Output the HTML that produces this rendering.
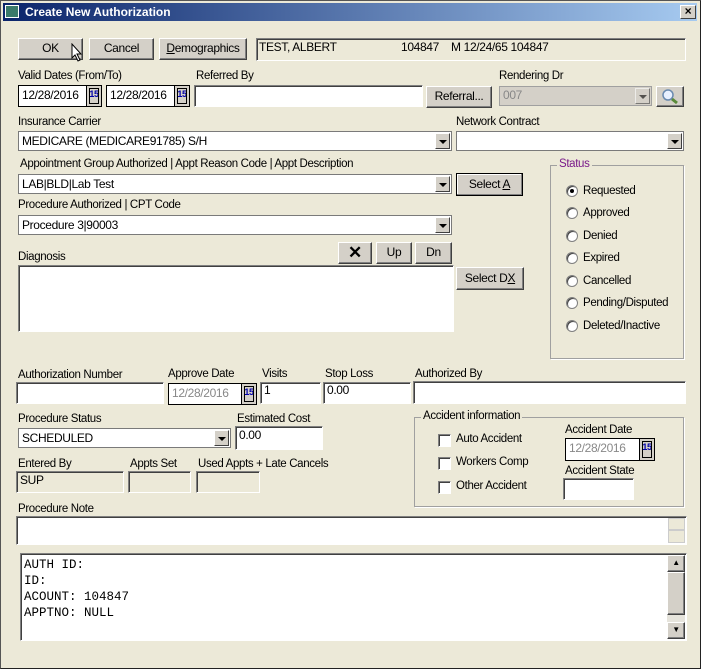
<!DOCTYPE html>
<html><head><style>
*{box-sizing:border-box;margin:0;padding:0}
body{width:701px;height:669px;background:#ece9d8;font-family:"Liberation Sans",sans-serif;font-size:11.5px;letter-spacing:-0.35px;color:#000;position:relative;overflow:hidden}
.a{position:absolute;white-space:nowrap}
.win{position:absolute;left:0;top:0;width:701px;height:669px;border:1px solid #555;border-right-color:#222;border-bottom-color:#222}
.title{position:absolute;left:3px;top:3px;width:694px;height:18px;background:linear-gradient(90deg,#0a246a,#a6caf0);color:#fff;font-weight:bold;font-size:12px;letter-spacing:0;padding:2px 0 0 22px}
.close{position:absolute;left:680px;top:5px;width:16px;height:14px;background:#d4d0c8;border:1px solid;border-color:#fff #404040 #404040 #fff;font-size:12px;font-weight:bold;text-align:center;line-height:11px;color:#000}
.btn{position:absolute;background:#d4d0c8;border:1px solid;border-color:#fff #404040 #404040 #fff;box-shadow:inset -1px -1px 0 #808080;text-align:center;font-size:12px}
.in{position:absolute;background:#fff;border:1px solid;border-color:#808080 #fff #fff #808080;box-shadow:inset 1px 1px 0 #404040;padding:2px 3px;font-size:12px}
.gr{background:#ece9d8}
.cb{position:absolute;background:#fff;border:1px solid #7a7a7a;padding:2px 3px;font-size:12px}
.dd{position:absolute;right:1px;top:1px;width:15px;bottom:1px;background:#d4d0c8;border:1px solid;border-color:#fff #404040 #404040 #fff}
.dd:after{content:"";position:absolute;left:3px;top:6px;border-left:4px solid transparent;border-right:4px solid transparent;border-top:4px solid #000}
.cal{position:absolute;width:16px;background:#d4d0c8;border:1px solid #000;font-size:9px;color:#00a;text-align:center;line-height:16px;font-weight:bold}
.cal:before{content:"";position:absolute;left:2px;top:2px;right:2px;bottom:2px;border:1px solid #000}
.rad{position:absolute;width:12px;height:12px;border-radius:50%;background:#fff;border:1px solid #808080;box-shadow:inset 1px 1px 0 #404040}
.chk{position:absolute;width:13px;height:13px;background:#fff;border:1px solid;border-color:#808080 #fff #fff #808080;box-shadow:inset 1px 1px 0 #404040}
.grp{position:absolute;border:1px solid #a0a0a0;box-shadow:1px 1px 0 #fff}
.gt{position:absolute;background:#ece9d8;padding:0 2px}
.mono{font-family:"Liberation Mono",monospace;font-size:12.5px;letter-spacing:0;line-height:16px}
</style></head><body>
<div class="win"></div>
<div class="title">Create New Authorization</div>
<div class="a" style="left:5px;top:5px;width:14px;height:13px;background:#3a7a6a;border:1px solid #fff"></div>
<div class="close">×</div>

<div class="btn" style="left:18px;top:38px;width:65px;height:22px;line-height:19px">OK</div>
<div class="btn" style="left:89px;top:38px;width:65px;height:22px;line-height:19px">Cancel</div>
<div class="btn" style="left:159px;top:38px;width:88px;height:22px;line-height:19px"><u>D</u>emographics</div>
<svg class="a" style="left:71px;top:43px" width="12" height="20"><path d="M1 1 L1 15 L4 12 L7 18 L9 17 L6 11 L10 11 Z" fill="#fff" stroke="#000"/></svg>
<div class="in gr" style="left:256px;top:38px;width:430px;height:23px;padding:1px 3px"></div>
<div class="a" style="left:259px;top:40px;font-size:12px">TEST, ALBERT</div>
<div class="a" style="left:401px;top:40px;font-size:12px">104847</div>
<div class="a" style="left:451px;top:40px;font-size:12px">M 12/24/65 104847</div>

<div class="a" style="left:18px;top:70px">Valid Dates (From/To)</div>
<div class="in" style="left:18px;top:85px;width:69px;height:22px;border:1px solid #000;box-shadow:none;color:#000">12/28/2016</div>
<div class="cal" style="left:86px;top:85px;height:22px">15</div>
<div class="in" style="left:106px;top:85px;width:69px;height:22px;border:1px solid #000;box-shadow:none">12/28/2016</div>
<div class="cal" style="left:174px;top:85px;height:22px">15</div>
<div class="a" style="left:196px;top:70px">Referred By</div>
<div class="in" style="left:194px;top:85px;width:229px;height:22px"></div>
<div class="btn" style="left:426px;top:86px;width:66px;height:22px;line-height:19px">Referral...</div>
<div class="a" style="left:499px;top:70px">Rendering Dr</div>
<div class="cb" style="left:499px;top:86px;width:153px;height:20px;background:#d4d0c8;border-color:#a0a0a0;color:#888;padding-top:1px">007<div class="dd" style="opacity:.6"></div></div>
<div class="btn" style="left:656px;top:86px;width:28px;height:21px"><svg width="20" height="18" viewBox="0 0 20 18"><circle cx="8" cy="8" r="5" fill="#e8f0ff" stroke="#6a8ab0" stroke-width="1.5"/><path d="M12 12 L17 16" stroke="#5a8a3a" stroke-width="3"/></svg></div>

<div class="a" style="left:18px;top:116px">Insurance Carrier</div>
<div class="cb" style="left:18px;top:131px;width:434px;height:20px;padding-top:2px">MEDICARE (MEDICARE91785) S/H<div class="dd"></div></div>
<div class="a" style="left:456px;top:116px">Network Contract</div>
<div class="cb" style="left:456px;top:131px;width:228px;height:20px"><div class="dd"></div></div>

<div class="a" style="left:20px;top:158px">Appointment Group Authorized | Appt Reason Code | Appt Description</div>
<div class="cb" style="left:18px;top:174px;width:434px;height:20px;padding-top:2px">LAB|BLD|Lab Test<div class="dd"></div></div>
<div class="btn" style="left:456px;top:173px;width:67px;height:23px;line-height:20px;border-color:#000;box-shadow:inset -1px -1px 0 #808080,inset 1px 1px 0 #fff">Select <u>A</u></div>

<div class="a" style="left:18px;top:199px">Procedure Authorized | CPT Code</div>
<div class="cb" style="left:18px;top:215px;width:434px;height:20px;padding-top:2px">Procedure 3|90003<div class="dd"></div></div>

<div class="grp" style="left:550px;top:165px;width:134px;height:194px"></div>
<div class="gt" style="left:557px;top:158px;color:#7a1a8a">Status</div>
<div class="rad" style="left:566px;top:185px"><div style="position:absolute;left:3px;top:3px;width:4px;height:4px;border-radius:50%;background:#000"></div></div>
<div class="a" style="left:583px;top:185px">Requested</div>
<div class="rad" style="left:566px;top:207px"></div><div class="a" style="left:583px;top:207px">Approved</div>
<div class="rad" style="left:566px;top:230px"></div><div class="a" style="left:583px;top:230px">Denied</div>
<div class="rad" style="left:566px;top:252px"></div><div class="a" style="left:583px;top:252px">Expired</div>
<div class="rad" style="left:566px;top:275px"></div><div class="a" style="left:583px;top:275px">Cancelled</div>
<div class="rad" style="left:566px;top:297px"></div><div class="a" style="left:583px;top:297px">Pending/Disputed</div>
<div class="rad" style="left:566px;top:320px"></div><div class="a" style="left:583px;top:320px">Deleted/Inactive</div>

<div class="a" style="left:18px;top:251px">Diagnosis</div>
<div class="btn" style="left:338px;top:242px;width:34px;height:22px;font-weight:bold;font-size:17px;line-height:19px">✕</div>
<div class="btn" style="left:376px;top:242px;width:36px;height:22px;line-height:19px">Up</div>
<div class="btn" style="left:415px;top:242px;width:37px;height:22px;line-height:19px">Dn</div>
<div class="in" style="left:18px;top:265px;width:436px;height:67px"></div>
<div class="btn" style="left:456px;top:267px;width:68px;height:23px;line-height:20px">Select D<u>X</u></div>

<div class="a" style="left:18px;top:369px">Authorization Number</div>
<div class="in" style="left:16px;top:382px;width:148px;height:22px"></div>
<div class="a" style="left:168px;top:368px">Approve Date</div>
<div class="in" style="left:168px;top:383px;width:74px;height:22px;border:1px solid #000;box-shadow:none;color:#888">12/28/2016</div>
<div class="cal" style="left:241px;top:383px;height:22px">15</div>
<div class="a" style="left:262px;top:368px">Visits</div>
<div class="in" style="left:260px;top:382px;width:61px;height:22px;padding-top:0">1</div>
<div class="a" style="left:325px;top:368px">Stop Loss</div>
<div class="in" style="left:323px;top:382px;width:88px;height:22px;padding-top:0">0.00</div>
<div class="a" style="left:415px;top:368px">Authorized By</div>
<div class="in" style="left:413px;top:381px;width:273px;height:23px"></div>

<div class="a" style="left:18px;top:413px">Procedure Status</div>
<div class="cb" style="left:18px;top:428px;width:213px;height:20px;padding-top:2px">SCHEDULED<div class="dd"></div></div>
<div class="a" style="left:237px;top:413px">Estimated Cost</div>
<div class="in" style="left:235px;top:426px;width:88px;height:24px;padding-top:1px">0.00</div>

<div class="a" style="left:18px;top:458px">Entered By</div>
<div class="in gr" style="left:16px;top:471px;width:108px;height:22px;padding-top:1px">SUP</div>
<div class="a" style="left:130px;top:458px">Appts Set</div>
<div class="in gr" style="left:128px;top:471px;width:63px;height:22px"></div>
<div class="a" style="left:198px;top:458px">Used Appts + Late Cancels</div>
<div class="in gr" style="left:196px;top:471px;width:64px;height:22px"></div>

<div class="grp" style="left:414px;top:417px;width:270px;height:90px"></div>
<div class="gt" style="left:421px;top:410px">Accident information</div>
<div class="chk" style="left:438px;top:434px"></div><div class="a" style="left:456px;top:433px">Auto Accident</div>
<div class="chk" style="left:438px;top:457px"></div><div class="a" style="left:456px;top:456px">Workers Comp</div>
<div class="chk" style="left:438px;top:481px"></div><div class="a" style="left:456px;top:480px">Other Accident</div>
<div class="a" style="left:565px;top:424px">Accident Date</div>
<div class="in" style="left:565px;top:438px;width:75px;height:23px;border:1px solid #000;box-shadow:none;color:#888">12/28/2016</div>
<div class="cal" style="left:639px;top:438px;height:23px">15</div>
<div class="a" style="left:565px;top:465px">Accident State</div>
<div class="in" style="left:563px;top:478px;width:71px;height:22px"></div>

<div class="a" style="left:18px;top:503px">Procedure Note</div>
<div class="in" style="left:16px;top:516px;width:671px;height:29px"></div>
<div class="a" style="left:668px;top:518px;width:17px;height:12px;background:#ece9d8;border:1px solid #ccc"></div>
<div class="a" style="left:668px;top:530px;width:17px;height:13px;background:#ece9d8;border:1px solid #ccc"></div>

<div class="in mono" style="left:20px;top:553px;width:667px;height:88px;padding:3px 0 0 3px">AUTH ID:<br>ID:<br>ACOUNT: 104847<br>APPTNO: NULL</div>
<div class="a" style="left:667px;top:555px;width:18px;height:84px;background:#e6e4dc"></div>
<div class="btn" style="left:667px;top:555px;width:18px;height:17px;font-size:8px;line-height:14px">▲</div>
<div class="btn" style="left:667px;top:572px;width:18px;height:43px"></div>
<div class="btn" style="left:667px;top:622px;width:18px;height:17px;font-size:8px;line-height:14px">▼</div>
</body></html>
